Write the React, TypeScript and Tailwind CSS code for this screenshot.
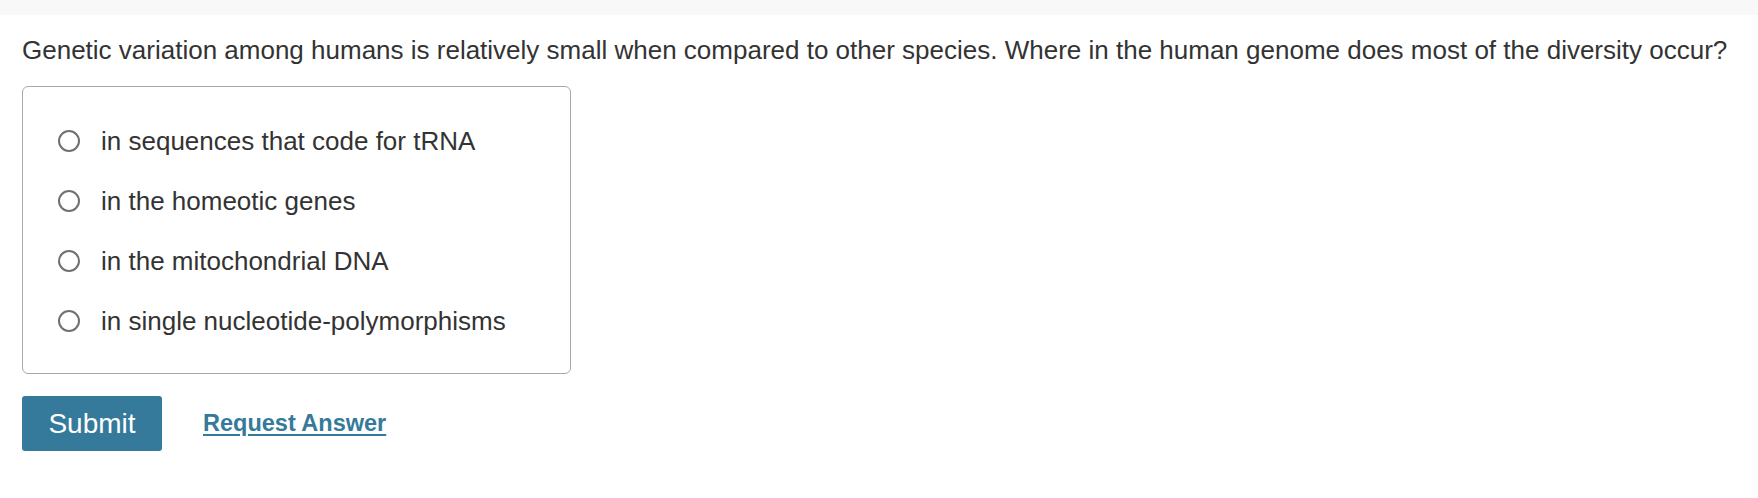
import { useState } from "react";

const options = [
  "in sequences that code for tRNA",
  "in the homeotic genes",
  "in the mitochondrial DNA",
  "in single nucleotide-polymorphisms",
];

export default function App() {
  const [selected, setSelected] = useState<number | null>(null);

  return (
    <main
      className="min-h-screen bg-white text-[#333333]"
      style={{ fontFamily: '"Liberation Sans", Arial, sans-serif' }}
    >
      <div className="h-[15px] bg-[#f8f8f8]" />
      <div className="px-[22px] pt-[20px]">
        <p className="text-[26px] leading-[30px]">
          Genetic variation among humans is relatively small when compared to other species. Where in the human genome
          does most of the diversity occur?
        </p>

        {/* ── options ── */}
        <div className="mt-[21px] w-[549px] rounded-[6px] border border-[#a8a8a8] px-[35px] pt-[24px] pb-[22px]">
          {options.map((opt, i) => (
            <label key={opt} className="flex h-[60px] cursor-pointer items-center gap-[21px]">
              <span className="flex h-[22px] w-[22px] shrink-0 items-center justify-center rounded-full border-2 border-[#707070]">
                {selected === i && <span className="h-[11px] w-[11px] rounded-full bg-[#357a9b]" />}
              </span>
              <input
                type="radio"
                name="answer"
                className="hidden"
                checked={selected === i}
                onChange={() => setSelected(i)}
              />
              <span className="text-[26px] leading-[30px]">{opt}</span>
            </label>
          ))}
        </div>

        {/* ── actions ── */}
        <div className="mt-[22px] flex items-center gap-[41px]">
          <button className="h-[55px] w-[140px] rounded-[3px] bg-[#357a9b] text-[28px] text-white">Submit</button>
          <a href="#" className="text-[23.5px] font-bold text-[#357a9b] underline underline-offset-[3px]">
            Request Answer
          </a>
        </div>
      </div>
    </main>
  );
}
